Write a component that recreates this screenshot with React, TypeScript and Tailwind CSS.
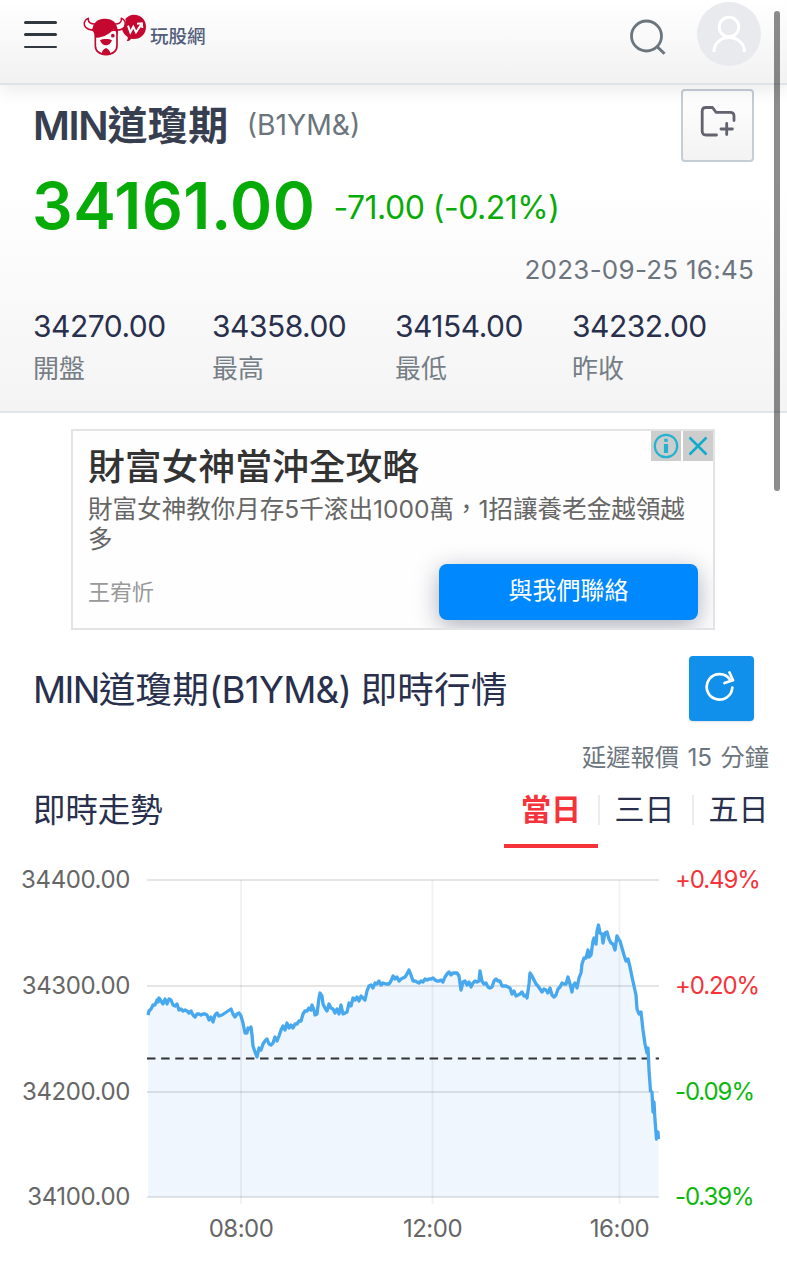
import clsx from 'clsx';

// ─── Data ─────────────────────────────────────────────────────────────────────

const STATS = [
  { label: '開盤', value: '34270.00', width: 'w-[179px]' },
  { label: '最高', value: '34358.00', width: 'w-[183px]' },
  { label: '最低', value: '34154.00', width: 'w-[177px]' },
  { label: '昨收', value: '34232.00', width: 'w-[150px]' },
];

const TABS = ['當日', '三日', '五日'];

const Y_TICKS = [
  { y: 880, price: '34400.00', pct: '+0.49%', color: '#f5333a' },
  { y: 986, price: '34300.00', pct: '+0.20%', color: '#f5333a' },
  { y: 1092, price: '34200.00', pct: '-0.09%', color: '#0bb80b' },
  { y: 1197, price: '34100.00', pct: '-0.39%', color: '#0bb80b' },
];

const X_TICKS = [
  { x: 241, time: '08:00' },
  { x: 432.5, time: '12:00' },
  { x: 619.5, time: '16:00' },
];

const TREND: [number, number][] = [
  [148, 1015], [149, 1011], [151, 1009], [153, 1005], [155, 1005], [157, 1000], [158, 1002], [159, 998], [161, 1001], [163, 1004],
  [165, 999], [167, 1004], [169, 999], [171, 1000], [173, 1005], [175, 1006], [177, 1004], [179, 1010], [181, 1009], [183, 1011],
  [185, 1010], [187, 1011], [189, 1013], [191, 1011], [193, 1015], [195, 1017], [197, 1014], [199, 1014], [201, 1015], [203, 1014],
  [205, 1014], [207, 1015], [209, 1020], [211, 1017], [213, 1022], [215, 1015], [217, 1013], [219, 1016], [222, 1015], [225, 1013],
  [228, 1011], [231, 1009], [233, 1014], [235, 1017], [237, 1014], [239, 1013], [241, 1016], [243, 1023], [245, 1033], [247, 1033],
  [248, 1028], [250, 1029], [251, 1027], [252, 1035], [253, 1046], [255, 1052], [257, 1057], [259, 1048], [261, 1050], [263, 1044],
  [265, 1041], [267, 1039], [269, 1044], [271, 1045], [273, 1043], [275, 1037], [277, 1041], [279, 1036], [281, 1030], [283, 1026],
  [285, 1030], [287, 1023], [289, 1028], [291, 1025], [293, 1028], [295, 1024], [297, 1024], [299, 1021], [301, 1021], [303, 1014],
  [305, 1011], [307, 1011], [309, 1008], [311, 1010], [312, 1005], [314, 1010], [315, 1015], [317, 1014], [319, 998], [320, 993],
  [322, 996], [323, 1004], [325, 1008], [327, 1011], [329, 1004], [331, 1008], [333, 1009], [335, 1013], [337, 1009], [339, 1014],
  [341, 1005], [343, 1014], [345, 1013], [347, 1012], [349, 1003], [351, 1006], [353, 998], [355, 1000], [357, 997], [359, 1001],
  [361, 996], [363, 998], [365, 1000], [367, 991], [369, 986], [371, 985], [373, 988], [375, 983], [377, 984], [379, 981],
  [381, 985], [383, 983], [386, 984], [389, 984], [391, 981], [393, 976], [395, 979], [397, 977], [399, 981], [401, 979],
  [403, 978], [405, 977], [407, 974], [409, 970], [411, 975], [413, 981], [415, 981], [417, 982], [419, 983], [421, 981],
  [423, 982], [425, 979], [427, 980], [429, 979], [431, 979], [433, 978], [435, 980], [437, 981], [439, 981], [441, 980],
  [443, 982], [445, 977], [447, 974], [449, 972], [451, 975], [453, 973], [455, 973], [457, 973], [459, 976], [461, 990],
  [463, 982], [465, 981], [467, 985], [469, 982], [471, 987], [473, 983], [475, 981], [477, 982], [479, 981], [480, 971],
  [482, 981], [484, 984], [486, 983], [488, 987], [490, 988], [492, 987], [494, 981], [496, 979], [498, 981], [500, 981],
  [502, 986], [504, 986], [506, 986], [508, 987], [510, 988], [512, 994], [514, 991], [516, 996], [518, 995], [520, 994],
  [522, 992], [524, 996], [526, 995], [527, 998], [529, 984], [530, 973], [532, 976], [534, 980], [536, 984], [538, 986],
  [540, 989], [542, 992], [544, 989], [546, 990], [548, 993], [550, 988], [552, 995], [554, 997], [556, 995], [558, 989],
  [560, 987], [562, 983], [564, 984], [566, 984], [568, 977], [570, 984], [572, 992], [573, 986], [575, 983], [577, 988],
  [579, 978], [581, 973], [582, 964], [584, 958], [586, 958], [588, 950], [589, 957], [591, 955], [593, 941], [594, 938],
  [596, 944], [597, 931], [598.5, 925], [600, 933], [602, 934], [603, 943], [605, 933], [607, 932], [609, 939], [611, 943],
  [613, 944], [615, 950], [617, 936], [619, 940], [620, 941], [622, 948], [624, 955], [626, 961], [628, 959], [630, 967],
  [632, 977], [634, 986], [636, 995], [637, 1009], [639, 1014], [641, 1012], [643, 1030], [645, 1044], [647, 1053], [648, 1048],
  [649, 1070], [650.5, 1091], [652, 1092], [653, 1112], [654, 1102], [655, 1120], [656.5, 1139], [658, 1132], [658.5, 1139],
];

const LINE_PATH = 'M' + TREND.map(([x, y]) => `${x} ${y}`).join('L');

// ─── Icons ────────────────────────────────────────────────────────────────────

function BullLogo() {
  return (
    <svg viewBox="249 42 192 126" className="w-16 h-[42px]" fill="none">
      {/* horns */}
      <path d="M287 72C273 73 263 67 265 55C253 59 249 73 257 82C262 88 271 91 283 90Z" fill="#fff" stroke="#c4082f" strokeWidth="4.500" strokeLinejoin="round" />
      <path d="M343 72C357 73 366 67 364 55C375 58 379 71 373 81C368 88 360 91 348 90Z" fill="#fff" stroke="#c4082f" strokeWidth="4.500" strokeLinejoin="round" />
      {/* face */}
      <path d="M286 96V136C286 153 296 163 318 164C341 163 351 153 351 136V90Z" fill="#fff" stroke="#c4082f" strokeWidth="5" />
      {/* hair */}
      <path d="M274 91C280 86 277 79 284 70C291 59 303 56 316 56C334 56 346 65 350 78C353 86 354 94 353 104C350 96 345 92 339 88C333 100 309 115 285 113C285 103 281 94 274 91Z" fill="#c4082f" />
      <circle cx="338.500" cy="107" r="5.500" fill="#c4082f" />
      <path d="M300 121C307 116 329 116 336 121C333 130 326 136 318 136C310 136 303 130 300 121Z" fill="#c4082f" />
      <path d="M318 144C325 147 331 153 332 164H304C305 153 311 147 318 144Z" fill="#c4082f" />
      {/* speech bubble */}
      <path d="M402 44C423 44 438 59 438 80C438 101 423 117 402 117C399 117 396 117 393 116C391 120 387 123 380 123C383 119 384 115 383 111C375 106 368 98 366 88C375 82 379 69 376 57C382 49 391 44 402 44Z" fill="#c4082f" />
      <path d="M384 77L391 97L400 80L408 97L424 73M411 71.500L425.500 70L427 84" stroke="#fff" strokeWidth="6" />
    </svg>
  );
}

function SearchIcon() {
  return (
    <svg viewBox="0 0 38 38" className="w-[38px] h-[38px]" fill="none" stroke="#6b757d" strokeWidth="2.8">
      <circle cx="17.5" cy="17" r="15" />
      <path d="M28 27.5L35.5 34.8" strokeWidth="3" />
    </svg>
  );
}

function UserIcon() {
  return (
    <svg viewBox="0 0 64 64" className="w-16 h-16" fill="none" stroke="#fff" strokeWidth="3">
      <circle cx="32" cy="25" r="9.8" />
      <path d="M17 50C17 41 24 35.5 32 35.5S47.500 41 47.500 50" />
    </svg>
  );
}

function FolderPlusIcon() {
  return (
    <svg viewBox="0 0 36 34" className="w-9 h-[34px]" fill="none" stroke="#62636f" strokeWidth="2.8" strokeLinecap="round" strokeLinejoin="round">
      <path d="M16.500 31H6C3.500 31 2.200 29.500 2.200 27V7.500C2.200 5 3.500 3.500 6 3.500H12.500L16 8.300H30C32.500 8.300 34 9.800 34 12V16.500" />
      <path d="M26.700 19.500V30.500M21 25H32.400" />
    </svg>
  );
}

function RefreshIcon() {
  return (
    <svg viewBox="0 0 32 32" className="w-8 h-8" fill="none" stroke="#fff" strokeWidth="2.7" strokeLinecap="round" strokeLinejoin="round">
      <path d="M28.300 16.500A12.800 12.800 0 1 1 26 8.500" />
      <path d="M25.500 1.500L29 9.300L20.500 12" />
    </svg>
  );
}

// ─── Sections ─────────────────────────────────────────────────────────────────

function Header() {
  return (
    <header className="relative z-10 h-[84.500px] flex items-start border-b-2 border-[#dfe2e6] bg-linear-to-b from-white to-[#f2f2f3] shadow-[0_4px_18px_rgba(0,0,0,0.09)]">
      <button className="mt-[21px] ml-6 h-[27px] w-[33px] flex flex-col justify-between">
        <span className="h-[2.500px] w-full rounded-full bg-[#30373f]" />
        <span className="h-[2.500px] w-full rounded-full bg-[#30373f]" />
        <span className="h-[2.500px] w-full rounded-full bg-[#30373f]" />
      </button>
      <a className="ml-[26px] mt-3.5 flex items-center">
        <BullLogo />
        <span className="ml-[3px] mt-0.5 text-[18.500px] leading-6 font-medium text-[#515d7a]">玩股網</span>
      </a>
      <div className="ml-auto mt-[19px]">
        <SearchIcon />
      </div>
      <div className="ml-[30px] mr-[26px] mt-0.5 w-16 h-16 rounded-full bg-[#e9eaee]">
        <UserIcon />
      </div>
    </header>
  );
}

function Quote() {
  return (
    <section className="h-[328.500px] border-b-2 border-[#e1e5ea] bg-linear-to-b from-white from-30% to-[#f4f4f5] pl-[33px]">
      <div className="flex h-[78px] pr-[33px]">
        <h1 className="mt-[11px] text-[40px] leading-[60px] font-semibold text-[#373e50] tracking-[0.4px]">
          <span className="tracking-[-1.300px]">MIN</span>道瓊期
        </h1>
        <span className="mt-2.5 ml-[18px] text-[28.300px] leading-[60px] text-[#6c757d]">(B1YM&amp;)</span>
        <button className="ml-auto mt-[4px] w-[73px] h-[73px] rounded-[4px] border-2 border-[#c5cdd6] bg-linear-to-b from-white to-[#f3f3f4] flex items-center justify-center pb-2">
          <FolderPlusIcon />
        </button>
      </div>
      <div className="flex items-center h-[87px] text-[#07ab07]">
        <span className="text-[64px] leading-[78px] font-semibold tracking-[0.5px] -ml-px mb-px">34161.00</span>
        <span className="ml-[18px] mt-[3px] text-[32px] leading-10 tracking-[-0.5px]">-71.00 (-0.21%)</span>
      </div>
      <p className="mt-px pr-[33px] text-right text-[26px] leading-[38px] tracking-[0.25px] text-[#6c757d]">2023-09-25 16:45</p>
      <div className="flex mt-4">
        {STATS.map((s) => (
          <div key={s.label} className={s.width}>
            <p className="text-[30px] leading-[43px] tracking-[-0.500px] text-[#28304d]">{s.value}</p>
            <p className="text-[26px] leading-[42px] text-[#757e86]">{s.label}</p>
          </div>
        ))}
      </div>
    </section>
  );
}

function AdCard() {
  return (
    <section className="relative mt-4 ml-[71px] w-[644px] h-[201px] overflow-hidden border-2 border-[#e3e3e5] bg-[#fefefe] pl-[15px]">
      <h2 className="mt-[14px] text-[36.800px] leading-[44px] font-medium text-[#333]">財富女神當沖全攻略</h2>
      <p className="mt-[5px] w-[605px] text-[24.550px] leading-[30px] text-[#666]">財富女神教你月存5千滚出1000萬，1招讓養老金越領越多</p>
      <div className="flex items-center mt-2.5">
        <span className="text-[22px] text-[#999]">王宥忻</span>
        <button className="ml-auto mr-[15px] w-[259px] h-14 pb-0.5 rounded-[8px] bg-[#0088ff] text-white text-[24px] shadow-[0_6px_24px_rgba(20,25,60,0.35)]">
          與我們聯絡
        </button>
      </div>
      <div className="absolute top-0 right-0 flex gap-0.5">
        <span className="w-[30px] h-[30px] bg-[#cdcdcd] flex items-center justify-center">
          <svg viewBox="0 0 26 26" className="w-[26px] h-[26px]" fill="none" stroke="#23b2cf">
            <circle cx="13" cy="13" r="11.200" strokeWidth="2.200" />
            <path d="M13 11V20" strokeWidth="4.200" />
            <path d="M13 5.800V8.800" strokeWidth="3.500" />
          </svg>
        </span>
        <span className="w-[30px] h-[30px] bg-[#cdcdcd] flex items-center justify-center">
          <svg viewBox="0 0 20 20" className="w-5 h-5" fill="none" stroke="#12accb" strokeWidth="2.500">
            <path d="M1.500 1.500L18.500 18.500M18.500 1.500L1.500 18.500" />
          </svg>
        </span>
      </div>
    </section>
  );
}

function TrendChart() {
  return (
    <svg viewBox="0 860 787 420" className="block w-[787px] h-[420px]" fontSize="24" fill="#666">
      <path d={`${LINE_PATH}V1197H148Z`} fill="#eff6fe" />
      {X_TICKS.map((t) => (
        <g key={t.time}>
          <path d={`M${t.x} 880V1204`} stroke="#000" strokeOpacity="0.05" strokeWidth="2" />
          <text x={t.x} y="1237" textAnchor="middle" letterSpacing="-0.5">{t.time}</text>
        </g>
      ))}
      {Y_TICKS.map((t) => (
        <g key={t.price}>
          <path d={`M147 ${t.y}H659`} stroke="#000" strokeOpacity="0.1" strokeWidth="2" />
          <text x="130" y={t.y + 8} textAnchor="end" letterSpacing="-0.4">{t.price}</text>
          <text x="675" y={t.y + 8} fill={t.color} letterSpacing="-1.1">{t.pct}</text>
        </g>
      ))}
      <path d="M147 1058.500H659" stroke="#333" strokeWidth="2.200" strokeDasharray="8.500 5.630" />
      <path d={LINE_PATH} fill="none" stroke="#47a8ee" strokeWidth="3.3" strokeLinejoin="round" />
    </svg>
  );
}

function Realtime() {
  return (
    <section>
      <div className="mt-[26px] flex items-center justify-between pl-[33px] pr-[33px]">
        <h2 className="mt-0.5 text-[36.700px] leading-[60px] text-[#28304d]">
          <span className="tracking-[-1.600px]">MIN</span>道瓊期<span className="tracking-[-0.750px]">(B1YM&amp;) </span>即時行情
        </h2>
        <button className="w-[65px] h-[65px] rounded-[4px] bg-[#1090ea] shadow-sm flex items-center justify-center pb-1 pr-[3px]">
          <RefreshIcon />
        </button>
      </div>
      <p className="mt-[18px] mb-px pr-[18px] text-right text-[24.300px] leading-9 [word-spacing:1.500px] text-[#6c757d]">延遲報價 15 分鐘</p>
      <div className="flex h-[72px] pl-[33px] pr-px">
        <h3 className="mt-[11px] text-[32.400px] leading-[48px] text-[#28304d]">即時走勢</h3>
        <div className="ml-auto flex">
          {TABS.map((tab, i) => (
            <div key={tab} className="flex">
              {i > 0 && <span className="mt-[19px] h-[30px] w-0.5 bg-[#ececee]" />}
              <button
                className={clsx(
                  'h-[72px] text-[30px]',
                  i === 0 ? 'w-[94px] pb-0.5 border-b-4 border-[#f5333a] font-bold text-[#f5333a]' : 'w-[92px] pr-[3px] pb-1.5 text-[#28304d]',
                )}
              >
                {tab}
              </button>
            </div>
          ))}
        </div>
      </div>
      <div className="mt-3">
        <TrendChart />
      </div>
    </section>
  );
}

// ─── Main ─────────────────────────────────────────────────────────────────────

export default function App() {
  return (
    <div
      lang="zh-Hant"
      className="relative w-[787px] h-[1280px] overflow-hidden bg-white font-['Inter','Noto_Sans_CJK_TC',sans-serif]"
    >
      <Header />
      <Quote />
      <AdCard />
      <Realtime />
      <div className="absolute z-20 top-[11px] right-[7px] w-1.5 h-[480px] rounded-full bg-black/45" />
    </div>
  );
}
